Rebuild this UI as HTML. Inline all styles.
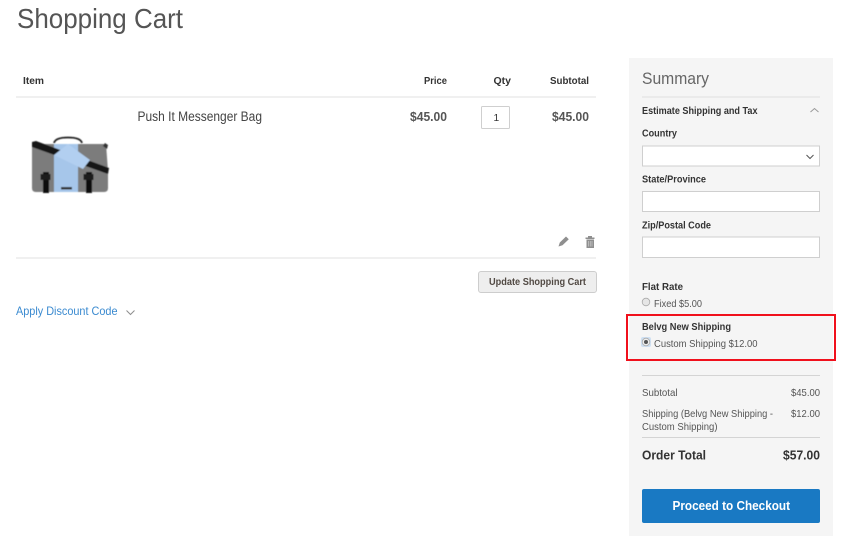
<!DOCTYPE html>
<html><head><meta charset="utf-8"><style>
html,body{margin:0;padding:0;background:#fff;width:850px;height:536px;overflow:hidden}
svg{display:block}
text{font-family:"Liberation Sans",sans-serif;fill:#333;font-size:10.200px}
.b{font-weight:bold}
</style></head><body>
<svg width="850" height="536" viewBox="0 0 850 536" xmlns="http://www.w3.org/2000/svg">
<defs><filter id="s" x="-5%" y="-5%" width="110%" height="110%"><feGaussianBlur stdDeviation=".55"/></filter></defs>
<rect x="629" y="58" width="204" height="478" fill="#f5f5f5"/>
<text x="17" y="28" style="font-size:28px;fill:#555" textLength="166" lengthAdjust="spacingAndGlyphs">Shopping Cart</text>

<text class="b" x="23" y="84" textLength="21" lengthAdjust="spacingAndGlyphs">Item</text>
<text class="b" x="424" y="84" textLength="23" lengthAdjust="spacingAndGlyphs">Price</text>
<text class="b" x="493.500" y="84" textLength="17.500" lengthAdjust="spacingAndGlyphs">Qty</text>
<text class="b" x="550" y="84" textLength="39" lengthAdjust="spacingAndGlyphs">Subtotal</text>
<rect x="16" y="96.500" width="580" height="1" fill="#e2e2e2"/>

<text x="137.500" y="121" style="font-size:13.500px;fill:#444" textLength="124.500" lengthAdjust="spacingAndGlyphs">Push It Messenger Bag</text>
<text class="b" x="410" y="121" style="font-size:13px;fill:#555" textLength="37" lengthAdjust="spacingAndGlyphs">$45.00</text>
<text class="b" x="552" y="121" style="font-size:13px;fill:#555" textLength="37" lengthAdjust="spacingAndGlyphs">$45.00</text>
<rect x="481.500" y="106.500" width="28" height="22" fill="#fff" stroke="#cfcfcf" rx="1"/>
<text x="493.500" y="121" textLength="5">1</text>

<!-- bag -->
<g filter="url(#s)">
<path d="M54 143 C55 139 60 137.500 68 137.500 C76 137.500 81 139 82 143" fill="none" stroke="#222" stroke-width="1.800"/>
<path d="M32 144 H106 L108 171 V188 Q108 192 104 192 H36 Q32 192 32 188Z" fill="#7b7b7b"/>
<rect x="54" y="144" width="24" height="48" fill="#a6c6ea"/>
<path d="M32 142 L36 141 L109 168 L108 174 L32 147Z" fill="#161616"/>
<path d="M54 155 L68 144 L90 160 L83 169Z" fill="#b2cff0"/>
<path d="M103 146 L105 143 L108 145 L107 149Z" fill="#333"/>
<rect x="43" y="172" width="6" height="21" fill="#111"/>
<rect x="40.500" y="174" width="10" height="6" fill="#1c1c1c"/>
<rect x="86" y="172" width="6" height="21" fill="#111"/>
<rect x="83.500" y="174" width="10" height="6" fill="#1c1c1c"/>
<rect x="61" y="187" width="11" height="2.500" fill="#333"/>
</g>

<!-- edit & trash -->
<path d="M558.500 246.500 L559.800 242.500 L566 236.500 L568.800 239.200 L562.500 245.300Z" fill="#8f8f8f"/>
<path d="M585.500 237.500 H594.500 V239 H585.500Z M588 236 H592 V237.500 H588Z" fill="#8f8f8f"/>
<path d="M586.500 239.500 H594 V248 H586.500Z" fill="#8f8f8f"/>
<path d="M588.500 241 V246.500 M590.200 241 V246.500 M592 241 V246.500" stroke="#d8d8d8" stroke-width=".6"/>

<rect x="16" y="257.500" width="580" height="1" fill="#e0e0e0"/>
<rect x="478.500" y="271.500" width="118" height="21" rx="2.500" fill="#eee" stroke="#cdcdcd"/>
<text class="b" x="489" y="285" style="font-size:10px;fill:#514943" textLength="97" lengthAdjust="spacingAndGlyphs">Update Shopping Cart</text>

<text x="16" y="315" style="font-size:12px;fill:#3a8ad0" textLength="101.500" lengthAdjust="spacingAndGlyphs">Apply Discount Code</text>
<path d="M126.500 310.500 L130.500 314.500 L134.500 310.500" fill="none" stroke="#8f8f8f" stroke-width="1"/>

<!-- summary -->
<text x="642" y="84" style="font-size:17px;fill:#666" textLength="67" lengthAdjust="spacingAndGlyphs">Summary</text>
<rect x="642" y="96.500" width="178" height="1" fill="#dedede"/>
<text class="b" x="642" y="114" style="font-size:10.200px" textLength="115.500" lengthAdjust="spacingAndGlyphs">Estimate Shipping and Tax</text>
<path d="M810.500 112 L814.500 108.500 L818.500 112" fill="none" stroke="#999" stroke-width="1"/>
<text class="b" x="642" y="136.500" textLength="35" lengthAdjust="spacingAndGlyphs">Country</text>
<rect x="642.500" y="146" width="177" height="20" fill="#fff" stroke="#cfcfcf"/>
<path d="M806.500 155 L810 158.500 L813.500 155" fill="none" stroke="#555" stroke-width="1"/>
<text class="b" x="642" y="182.500" textLength="64" lengthAdjust="spacingAndGlyphs">State/Province</text>
<rect x="642.500" y="191.500" width="177" height="20" fill="#fff" stroke="#cfcfcf"/>
<text class="b" x="642" y="228.500" textLength="69" lengthAdjust="spacingAndGlyphs">Zip/Postal Code</text>
<rect x="642.500" y="237" width="177" height="20.500" fill="#fff" stroke="#cfcfcf"/>

<text class="b" x="642" y="290" textLength="41" lengthAdjust="spacingAndGlyphs">Flat Rate</text>
<circle cx="646" cy="302" r="3.800" fill="#e6e6e6" stroke="#aaa" stroke-width=".8"/>
<text x="654" y="307" textLength="48" lengthAdjust="spacingAndGlyphs" style="fill:#555">Fixed $5.00</text>

<rect x="627" y="315" width="208" height="45" fill="none" stroke="#f0101c" stroke-width="2"/>
<text class="b" x="642" y="330" textLength="89" lengthAdjust="spacingAndGlyphs">Belvg New Shipping</text>
<rect x="641" y="337" width="10" height="10" rx="2" fill="#cfe0f2"/>
<circle cx="646" cy="342" r="3.800" fill="#eee" stroke="#aaa" stroke-width=".8"/>
<circle cx="646" cy="342" r="2" fill="#555"/>
<text x="654" y="347" textLength="103.500" lengthAdjust="spacingAndGlyphs" style="fill:#555">Custom Shipping $12.00</text>

<rect x="642" y="375" width="178" height="1" fill="#d4d4d4"/>
<text x="642" y="396" style="fill:#555" textLength="35.500" lengthAdjust="spacingAndGlyphs">Subtotal</text>
<text x="791" y="396" style="fill:#555" textLength="29" lengthAdjust="spacingAndGlyphs">$45.00</text>
<text x="642" y="417" style="fill:#555" textLength="131" lengthAdjust="spacingAndGlyphs">Shipping (Belvg New Shipping -</text>
<text x="791" y="417" style="fill:#555" textLength="29" lengthAdjust="spacingAndGlyphs">$12.00</text>
<text x="642" y="430" style="fill:#555" textLength="75.500" lengthAdjust="spacingAndGlyphs">Custom Shipping)</text>
<rect x="642" y="437" width="178" height="1" fill="#d4d4d4"/>
<text class="b" x="642" y="459.500" style="font-size:13px" textLength="64" lengthAdjust="spacingAndGlyphs">Order Total</text>
<text class="b" x="783" y="459.500" style="font-size:13px" textLength="37" lengthAdjust="spacingAndGlyphs">$57.00</text>

<rect x="642" y="489" width="178" height="34" rx="2" fill="#1979c3"/>
<text class="b" x="672.500" y="510" style="font-size:12.500px;fill:#fff" textLength="117.500" lengthAdjust="spacingAndGlyphs">Proceed to Checkout</text>
</svg>
</body></html>
